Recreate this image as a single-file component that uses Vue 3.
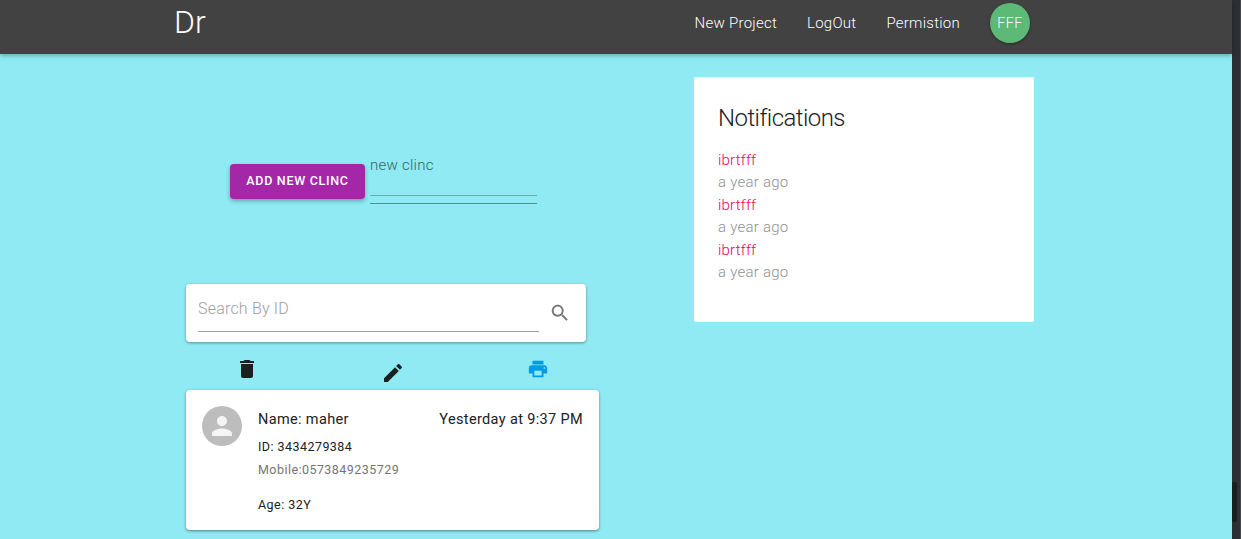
<script setup>
const notes = [1, 2, 3]
</script>

<template>
  <div class="page">
    <div class="main">
      <header class="nav">
        <div class="brand">Dr</div>
        <nav class="links">
          <a>New Project</a>
          <a>LogOut</a>
          <a>Permistion</a>
          <div class="chip">FFF</div>
        </nav>
      </header>
      <div class="content">
        <div class="left">
          <div class="add-row">
            <button class="add-btn">Add new clinc</button>
            <div class="field">
              <div class="field-label">new clinc</div>
              <div class="line-grey"></div>
              <div class="line-teal"></div>
            </div>
          </div>
          <div class="search-card">
            <div class="search-input">Search By ID</div>
            <svg class="search-icon" viewBox="0 0 24 24" width="22" height="22"><path fill="#757575" d="M15.5 14h-.79l-.28-.27C15.41 12.59 16 11.11 16 9.5 16 5.91 13.09 3 9.5 3S3 5.91 3 9.5 5.91 16 9.5 16c1.61 0 3.09-.59 4.23-1.57l.27.28v.79l5 4.99L20.49 19l-4.99-5zm-6 0C7.01 14 5 11.99 5 9.5S7.01 5 9.5 5 14 7.01 14 9.5 11.99 14 9.5 14z"/></svg>
          </div>
          <div class="actions">
            <svg viewBox="0 0 24 24" width="24" height="24"><path fill="#1a2020" d="M6 19c0 1.1.9 2 2 2h8c1.1 0 2-.9 2-2V7H6v12zM19 4h-3.5l-1-1h-5l-1 1H5v2h14V4z"/></svg>
            <svg class="edit" viewBox="0 0 24 24" width="24" height="24"><path fill="#1a2020" d="M3 17.25V21h3.75L17.81 9.94l-3.75-3.75L3 17.25zM20.71 7.04c.39-.39.39-1.02 0-1.41l-2.34-2.34c-.39-.39-1.02-.39-1.41 0l-1.83 1.83 3.75 3.75 1.83-1.83z"/></svg>
            <svg class="print" viewBox="0 0 24 24" width="22" height="22"><path fill="#039be5" d="M19 8H5c-1.66 0-3 1.34-3 3v6h4v4h12v-4h4v-6c0-1.66-1.34-3-3-3zm-3 11H8v-5h8v5zm3-7c-.55 0-1-.45-1-1s.45-1 1-1 1 .45 1 1-.45 1-1 1zm-1-9H6v4h12V3z"/></svg>
          </div>
          <div class="patient">
            <div class="avatar">
              <svg viewBox="0 0 24 24" width="30" height="30"><path fill="#f5f5f5" d="M12 12c2.21 0 4-1.79 4-4s-1.79-4-4-4-4 1.79-4 4 1.79 4 4 4zm0 2c-2.67 0-8 1.34-8 4v2h16v-2c0-2.66-5.33-4-8-4z"/></svg>
            </div>
            <div class="info">
              <div class="top-line"><span>Name: maher</span><span>Yesterday at 9:37 PM</span></div>
              <div class="small id">ID: 3434279384</div>
              <div class="small mobile">Mobile:0573849235729</div>
              <div class="small age">Age: 32Y</div>
            </div>
          </div>
        </div>
        <aside class="notes">
          <h2>Notifications</h2>
          <template v-for="n in notes" :key="n">
            <div class="note-title">ibrtfff</div>
            <div class="note-time">a year ago</div>
          </template>
        </aside>
      </div>
    </div>
    <div class="scrollbar"><div class="thumb"></div></div>
  </div>
</template>

<style>
html, body { margin: 0; height: 100%; overflow: hidden; background: #8feaf3; }
</style>

<style scoped>
.page {
  display: flex;
  width: 1241px;
  height: 539px;
  overflow: hidden;
  background: #8feaf3;
  font-family: Roboto, "Liberation Sans", sans-serif;
}
.main { width: 1232px; flex: none; }
.scrollbar {
  width: 9px;
  flex: none;
  background: #2c2f33;
  border-right: 1px solid #45484c;
  padding-top: 482px;
  box-sizing: border-box;
}
.thumb { width: 5px; height: 40px; background: #1b1c1e; border-radius: 2px; }
.nav {
  height: 54px;
  background: #424242;
  box-shadow: 0 2px 4px rgba(0, 0, 0, .25);
  display: flex;
  justify-content: space-between;
  color: #fff;
  padding: 0 202px 0 174px;
  position: relative;
}
.brand { font-size: 32px; font-weight: 300; line-height: 44px; }
.links { display: flex; gap: 30px; height: 46px; align-items: center; font-size: 15px; font-weight: 300; letter-spacing: .25px; }
.chip {
  width: 40px; height: 40px; border-radius: 50%;
  background: #5cb976; display: flex; align-items: center; justify-content: center;
  font-size: 14px; font-weight: 300; letter-spacing: .6px;
  box-shadow: 0 1px 3px rgba(0, 0, 0, .35);
}
.content { display: flex; padding-left: 186px; }
.left { width: 413px; flex: none; padding-top: 100px; }
.add-row { display: flex; padding-left: 44px; height: 130px; align-items: flex-start; }
.add-btn {
  margin-top: 10px;
  width: 135px; height: 35px; border: 0; border-radius: 4px;
  background: #a427a8; color: #fff;
  font: 500 12.5px Roboto, sans-serif; letter-spacing: .7px; text-transform: uppercase;
  box-shadow: 0 2px 4px rgba(0, 0, 0, .3);
  padding: 0 0 2px;
}
.field { margin-left: 5px; width: 167px; }
.field-label { font-size: 15px; font-weight: 300; line-height: 22px; color: #35666c; letter-spacing: .25px; }
.line-grey { height: 1px; background: #8d9ea2; margin-top: 19px; }
.line-teal { height: 1px; background: #4b949c; margin-top: 7px; }
.search-card {
  width: 400px; height: 58px; background: #fff; border-radius: 4px;
  box-shadow: 0 1px 3px rgba(0, 0, 0, .4);
  display: flex; padding: 0 15px 0 12px; box-sizing: border-box; justify-content: space-between;
}
.search-input {
  width: 341px; height: 48px; box-sizing: border-box; border-bottom: 1px solid #9e9e9e;
  font-size: 16px; font-weight: 300; color: #9e9e9e; line-height: 50px; letter-spacing: .2px;
}
.search-icon { margin-top: 18px; }
.actions { display: flex; gap: 121.5px; height: 48px; padding-left: 49px; padding-top: 15px; box-sizing: border-box; }
.edit { margin-top: 4px; }
.print { margin: 1px 0 0 1px; }
.patient {
  height: 140px; background: #fff; border-radius: 4px;
  box-shadow: 0 1px 3px rgba(0, 0, 0, .45);
  display: flex; padding: 16px 16px 0; box-sizing: border-box; gap: 16px;
  color: #212121;
}
.avatar { width: 40px; height: 40px; border-radius: 50%; background: #bdbdbd; display: flex; align-items: center; justify-content: center; flex: none; }
.info { flex: 1; }
.top-line { display: flex; justify-content: space-between; font-size: 14.5px; letter-spacing: .35px; line-height: 26px; padding-top: 1px; }
.small { font-size: 12.5px; letter-spacing: .45px; line-height: 16px; }
.id { margin-top: 6px; }
.mobile { margin-top: 7px; color: #757575; }
.age { margin-top: 19px; }
.notes {
  margin: 23px 0 0 95px;
  width: 340px; height: 245px; background: #fff; border-radius: 2px;
  padding: 24px; box-sizing: border-box;
}
.notes h2 { margin: 0 0 14px; font-size: 24px; font-weight: 300; line-height: 34px; color: #212121; letter-spacing: -.55px; }
.note-title { font-size: 15px; font-weight: 300; line-height: 22.5px; color: #f50057; letter-spacing: .2px; }
.note-time { font-size: 15px; font-weight: 300; line-height: 22.5px; margin-top: -1px; padding-bottom: 1px; color: #8f8f8f; letter-spacing: .25px; }
</style>
